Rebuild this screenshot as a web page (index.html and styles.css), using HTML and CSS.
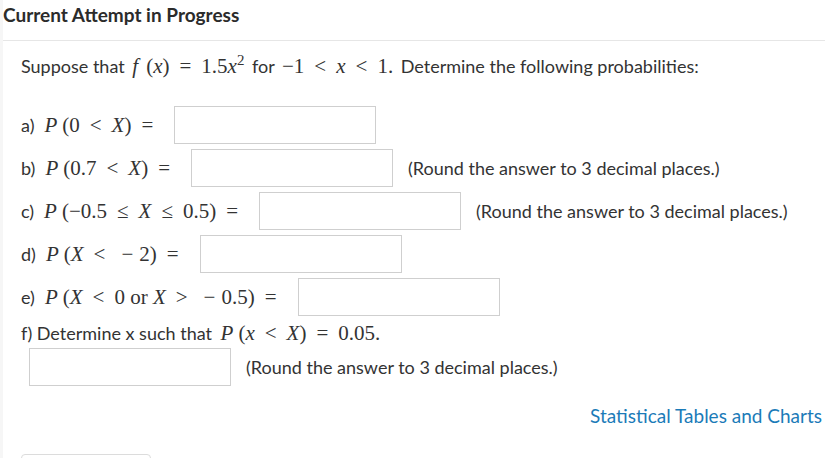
FILE: index.html
```html
<!DOCTYPE html>
<html lang="en">
<head>
  <meta charset="UTF-8" />
  <title>Current Attempt in Progress</title>
  <link rel="stylesheet" href="styles.css">
</head>
<body>
  <div class="page">
    <h1 class="attempt-title">Current Attempt in Progress</h1>
    <div class="question">
      <p class="intro">
        Suppose that <span class="m"><i class="fn f">f</i>(<i>x</i>)<span class="rel">=</span>1.5<i>x</i><sup>2</sup></span> for <span class="m">&minus;1<span class="rel">&lt;</span><i>x</i><span class="rel">&lt;</span>1.</span> Determine the following probabilities:
      </p>

      <div class="row">
        <span class="lbl">a)</span>
        <span class="m"><i class="fn">P</i>(0<span class="rel">&lt;</span><i>X</i>)<span class="rel">=</span></span>
        <input type="text" class="answer" />
      </div>
      <div class="row">
        <span class="lbl">b)</span>
        <span class="m"><i class="fn">P</i>(0.7<span class="rel">&lt;</span><i>X</i>)<span class="rel">=</span></span>
        <input type="text" class="answer" />
        <span class="note">(Round the answer to 3 decimal places.)</span>
      </div>
      <div class="row">
        <span class="lbl">c)</span>
        <span class="m"><i class="fn">P</i>(&minus;0.5<span class="rel">&le;</span><i>X</i><span class="rel">&le;</span>0.5)<span class="rel">=</span></span>
        <input type="text" class="answer" />
        <span class="note">(Round the answer to 3 decimal places.)</span>
      </div>
      <div class="row">
        <span class="lbl">d)</span>
        <span class="m"><i class="fn">P</i>(<i>X</i><span class="rel">&lt;</span><span class="bin">&minus;</span>2)<span class="rel">=</span></span>
        <input type="text" class="answer" />
      </div>
      <div class="row">
        <span class="lbl">e)</span>
        <span class="m"><i class="fn">P</i>(<i>X</i><span class="rel">&lt;</span>0 or <i>X</i><span class="rel">&gt;</span><span class="bin">&minus;</span>0.5)<span class="rel">=</span></span>
        <input type="text" class="answer" />
      </div>
      <div class="row-text">
        <span class="lbl">f) Determine x such that</span>
        <span class="m"><i class="fn">P</i>(<i>x</i><span class="rel">&lt;</span><i>X</i>)<span class="rel">=</span>0.05.</span>
      </div>
      <div class="row indent">
        <input type="text" class="answer" />
        <span class="note">(Round the answer to 3 decimal places.)</span>
      </div>

      <div class="links">
        <a href="#" class="tables-link">Statistical Tables and Charts</a>
      </div>
      <div class="footer-btn"></div>
    </div>
  </div>
</body>
</html>
```

FILE: styles.css
```css
body {
  margin: 0;
  font-family: Lato, 'Open Sans', sans-serif;
  color: #333;
  background-color: #f6f6f6;
}
.page {
  margin-left: 3px;
  background-color: #fff;
  height: 458px;
  overflow: hidden;
}
.attempt-title {
  margin: 0;
  padding: 3px 0 0 0;
  height: 37px;
  font-size: 19px;
  font-weight: bold;
  color: #2b2b2b;
  border-bottom: 1px solid #e6e6e6;
}
.question {
  padding: 0 0 0 18px;
}
.intro {
  margin: 13px 0 0 0;
  font-size: 18px;
  line-height: 24px;
}
.m {
  font-family: 'Liberation Serif', 'Times New Roman', serif;
  font-size: 21px;
  margin: 0 3px;
  white-space: nowrap;
}
.m i {
  font-style: italic;
}
.m .fn {
  margin-right: 5px;
}
.m .f {
  margin-right: 8px;
}
.m sup {
  font-size: 15px;
  line-height: 0;
}
.rel {
  margin: 0 10px;
}
.bin {
  margin: 0 6px;
}
.lbl {
  font-size: 18px;
}
.row {
  display: flex;
  align-items: center;
  margin-top: 5px;
  font-size: 18px;
}
.row:first-of-type {
  margin-top: 28px;
}
.row .m {
  margin-left: 10px;
}
.answer {
  width: 202px;
  height: 38px;
  box-sizing: border-box;
  margin: 0 0 0 8px;
  border: 1px solid #cfcfcf;
  border-radius: 0;
  background-color: #fff;
}
.note {
  margin-left: 15px;
  font-size: 18px;
}
.row-text {
  margin-top: 2px;
  font-size: 18px;
  line-height: 30px;
}
.row-text .m {
  margin-left: 4px;
}
.indent {
  margin-top: 0;
}
.links {
  text-align: right;
  margin-top: 18px;
  padding-right: 3px;
}
.tables-link {
  font-size: 19px;
  color: #1b7bb8;
  text-decoration: none;
}
.footer-btn {
  margin: 27px 0 0 0;
  width: 128px;
  height: 30px;
  border: 1px solid #dcdcdc;
  border-radius: 4px;
}
```
